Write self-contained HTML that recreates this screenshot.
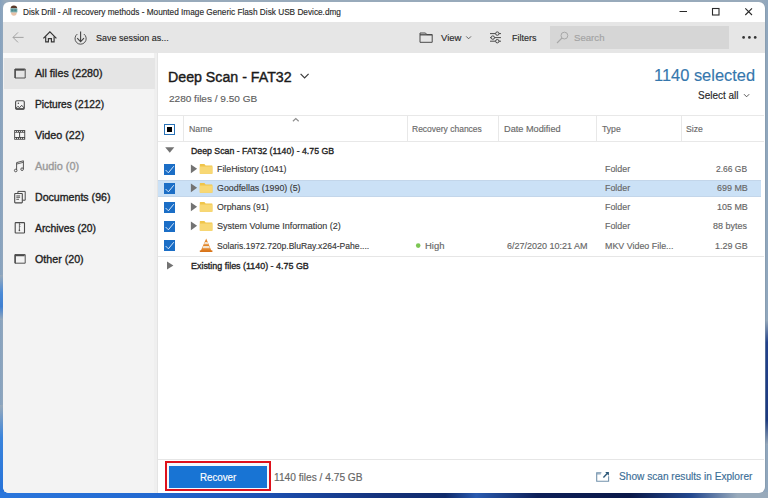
<!DOCTYPE html>
<html><head><meta charset="utf-8">
<style>
*{margin:0;padding:0;box-sizing:border-box}
html,body{width:768px;height:498px;overflow:hidden}
body{position:relative;font-family:"Liberation Sans",sans-serif;background:#98aabb}
.a{position:absolute}
.t{position:absolute;white-space:nowrap;line-height:1}
svg{position:absolute;overflow:visible}
</style></head><body>
<!-- desktop -->
<div class="a" style="left:0;top:0;width:768px;height:498px;background:linear-gradient(90deg,#86a2bf 0,#98aabb 5px,#98aabb 760px,#8fa6bd 768px)"></div>
<div class="a" style="left:0;top:275px;width:4px;height:45px;background:linear-gradient(180deg,#98aabb,#4a8ad6 40%,#3f80d2 70%,#98aabb)"></div>
<div class="a" style="left:0;top:405px;width:4px;height:93px;background:linear-gradient(180deg,#98aabb,#3a84dc 35%,#2470d8)"></div>
<div class="a" style="left:764px;top:320px;width:4px;height:125px;background:linear-gradient(180deg,#98aabb,#23428c 18%,#1d3a80 80%,#98aabb)"></div>
<div class="a" style="left:0;top:492px;width:768px;height:6px;background:linear-gradient(90deg,#2a76dc 0,#2268d0 20%,#1c4fb0 35%,#14317a 50%,#0f2a6a 58%,#2a5bb0 62%,#0d1f58 70%,#0a1848 82%,#23488f 90%,#98aabb 96%)"></div>
<!-- window -->
<div class="a" style="left:3px;top:2px;width:761.6px;height:490.8px;background:#fff;border-radius:6px;overflow:hidden;box-shadow:0.5px 0 0 #7f93a6">
  <div class="a" style="left:0;top:20px;width:762px;height:31px;background:#e6e6e6"></div>
  
  <div class="a" style="left:0;top:51px;width:154px;height:440px;background:#f3f3f3"></div>
  <div class="a" style="left:0;top:51px;width:154px;height:5px;background:#fafafa"></div>
  <div class="a" style="left:150.5px;top:51px;width:3.5px;height:440px;background:#efefef"></div>
  <div class="a" style="left:154px;top:51px;width:1px;height:440px;background:#e4e4e4"></div>
  <div class="a" style="left:1px;top:56px;width:150.5px;height:31px;background:#e5e5e5"></div>
</div>

<!-- title icon -->
<svg style="left:0;top:0" width="30" height="22">
  <path d="M10.6 8.5 Q10.6 5.6 13.9 5.6 Q17.2 5.6 17.2 8.5 Z" fill="#5a3a2a"/>
  <rect x="10.4" y="8.2" width="7" height="4.6" rx="1" fill="#7fb3b5"/>
  <path d="M11 12.6 H16.8 Q16.6 15.8 13.9 15.8 Q11.2 15.8 11 12.6 Z" fill="#e8c2a8"/>
  <rect x="11.2" y="9.2" width="2.4" height="2.2" fill="#4d8a8d"/>
  <rect x="14.2" y="9.2" width="2.4" height="2.2" fill="#4d8a8d"/>
</svg>
<!-- window controls -->
<svg style="left:0;top:0" width="768" height="22">
  <line x1="679.5" y1="11.5" x2="687" y2="11.5" stroke="#2a2a2a" stroke-width="1"/>
  <rect x="712.5" y="8.5" width="6.5" height="6.5" fill="none" stroke="#2a2a2a" stroke-width="1.1"/>
  <path d="M745.3 8.3 L752 15 M752 8.3 L745.3 15" stroke="#2a2a2a" stroke-width="1.1"/>
</svg>

<!-- toolbar icons -->
<svg style="left:0;top:0" width="768" height="56">
  <path d="M13 37.4 H23.6 M13 37.4 L18 32.4 M13 37.4 L18 42.4" stroke="#a3a3a3" stroke-width="1" fill="none"/>
  <path d="M43.4 38.4 L49.9 31.9 L56.4 38.4" stroke="#333" stroke-width="1.2" fill="none" stroke-linejoin="miter"/>
  <path d="M45.7 36.6 V41.9 H48.4 V38.6 H51.4 V41.9 H54.1 V36.6" stroke="#333" stroke-width="1.15" fill="none"/>
  <path d="M77.4 34 A5.6 5.6 0 1 0 83.8 34" stroke="#555" stroke-width="1" fill="none"/>
  <path d="M80.6 31.4 V41.6 M77.2 38.2 L80.6 41.6 L84 38.2" stroke="#444" stroke-width="1.1" fill="none"/>
  <!-- view folder -->
  <path d="M420 33 H425.5 L426.8 34.6 H432.2 V42.3 H420 Z" stroke="#4a4a4a" stroke-width="1" fill="none"/>
  <line x1="420" y1="34.8" x2="432.2" y2="34.8" stroke="#4a4a4a" stroke-width="1.3"/>
  <path d="M466.2 36.4 L468.6 38.8 L471 36.4" stroke="#555" stroke-width="0.9" fill="none"/>
  <!-- filters -->
  <path d="M490 33.6 H501 M490 37.6 H501 M490 41.2 H501" stroke="#4a4a4a" stroke-width="1" fill="none"/>
  <circle cx="497.3" cy="33.6" r="1.7" fill="#e6e6e6" stroke="#4a4a4a" stroke-width="1"/>
  <circle cx="492.8" cy="37.6" r="1.7" fill="#e6e6e6" stroke="#4a4a4a" stroke-width="1"/>
  <circle cx="497.3" cy="41.2" r="1.7" fill="#e6e6e6" stroke="#4a4a4a" stroke-width="1"/>
</svg>
<div class="a" style="left:550px;top:26px;width:179px;height:23px;background:#d6d6d6"></div>
<svg style="left:0;top:0" width="768" height="56">
  <circle cx="564.4" cy="35.6" r="3.4" stroke="#a8a8a8" stroke-width="1" fill="none"/>
  <path d="M562 38 L557 43" stroke="#a8a8a8" stroke-width="1.1"/>
  <circle cx="743.6" cy="37.4" r="1.35" fill="#333"/>
  <circle cx="749.4" cy="37.4" r="1.35" fill="#333"/>
  <circle cx="755.2" cy="37.4" r="1.35" fill="#333"/>
</svg>

<!-- sidebar icons -->
<svg style="left:0;top:0" width="160" height="280">
  <g fill="none" stroke="#4a4a4a">
    <!-- all files -->
    <path d="M15 69 H25.2 V78 H15 Z" stroke-width="0.95"/>
    <path d="M15.2 69.8 H24.6" stroke-width="1.7"/>
    <path d="M15.2 69 V78" stroke-width="1.3"/>
    <!-- pictures -->
    <rect x="15.6" y="100.7" width="8.7" height="8.4" rx="1.3" stroke-width="1.1"/>
    <path d="M15.6 108.6 L17.9 106.3 L19.6 107.7 L21.7 105.3 L24.3 108.2" stroke-width="1"/>
    <path d="M15.8 108.9 H24.2" stroke-width="1.3"/>
    <circle cx="18.4" cy="103.3" r="0.75" fill="#4a4a4a" stroke="none"/>
    <!-- audio -->
    <path d="M16.6 170 V162.6 L23.4 160.8 V169" stroke-width="1" stroke="#555"/>
    <path d="M16.6 164.1 L23.4 162.3" stroke-width="0.9" stroke="#555"/>
    <circle cx="15.7" cy="170.5" r="1.3" stroke-width="1" stroke="#555"/>
    <circle cx="22.1" cy="169.2" r="1.3" stroke-width="1" stroke="#555"/>
    <!-- documents -->
    <path d="M17.9 193 V191.4 H25.2 V200.2 H22.6" stroke-width="1"/>
    <rect x="14.7" y="193.5" width="7.6" height="9.4" rx="0.6" stroke-width="1.1"/>
    <path d="M16.3 195.9 H20.1 M16.3 197.3 H20.1 M16.3 199.3 H19" stroke-width="0.9"/>
    <!-- archives -->
    <rect x="15.2" y="222.6" width="9.3" height="10.4" rx="0.6" stroke-width="1.1"/>
    <path d="M19.4 222.6 V230.4" stroke-width="0.8"/>
    <path d="M19.6 224.5 h0.8 M19.6 226.5 h0.8" stroke-width="0.7"/>
    <circle cx="19.4" cy="230.4" r="0.8" fill="#4a4a4a" stroke="none"/>
    <!-- other -->
    <path d="M15 254.6 H25.2 V263.2 H15 Z" stroke-width="0.95"/>
    <path d="M15.2 255.4 H24.6" stroke-width="1.7"/>
    <path d="M15.2 254.6 V263.2" stroke-width="1.3"/>
  </g>
  <!-- video -->
  <rect x="14.2" y="130.1" width="11" height="9.6" fill="#444"/>
  <rect x="15.1" y="132.7" width="4" height="4.3" fill="#f3f3f3"/>
  <rect x="20.1" y="132.7" width="4.2" height="4.3" fill="#f3f3f3"/>
  <g fill="#f3f3f3">
    <circle cx="15.5" cy="131.5" r="0.62"/><circle cx="17.5" cy="131.5" r="0.62"/><circle cx="19.6" cy="131.5" r="0.62"/><circle cx="21.6" cy="131.5" r="0.62"/><circle cx="23.6" cy="131.5" r="0.62"/>
    <circle cx="15.5" cy="138.3" r="0.62"/><circle cx="17.5" cy="138.3" r="0.62"/><circle cx="19.6" cy="138.3" r="0.62"/><circle cx="21.6" cy="138.3" r="0.62"/><circle cx="23.6" cy="138.3" r="0.62"/>
  </g>
</svg>

<!-- table lines -->
<div class="a" style="left:158px;top:115px;width:606px;height:1px;background:#e8e8e8"></div>
<div class="a" style="left:158px;top:141px;width:606px;height:1px;background:#e8e8e8"></div>
<div class="a" style="left:183px;top:115px;width:1px;height:26px;background:#e8e8e8"></div>
<div class="a" style="left:407px;top:115px;width:1px;height:26px;background:#e8e8e8"></div>
<div class="a" style="left:498px;top:115px;width:1px;height:26px;background:#e8e8e8"></div>
<div class="a" style="left:596px;top:115px;width:1px;height:26px;background:#e8e8e8"></div>
<div class="a" style="left:681px;top:115px;width:1px;height:26px;background:#e8e8e8"></div>
<!-- header checkbox -->
<div class="a" style="left:164px;top:124px;width:11px;height:11px;border:1.6px solid #2a73b8;background:#fff"></div>
<div class="a" style="left:167px;top:127px;width:5px;height:5px;background:#000"></div>
<svg style="left:0;top:0" width="768" height="160">
  <path d="M292.9 121.2 L295.8 118.5 L298.7 121.2" stroke="#8f8f8f" stroke-width="1.2" fill="none"/>
  <path d="M165.2 147.2 H174.3 L169.75 152.8 Z" fill="#737373"/>
</svg>

<!-- selected row -->
<div class="a" style="left:158px;top:180px;width:603px;height:17px;background:#cbe1f6;border-top:1px solid #c3d6ea;border-bottom:1px solid #c3d6ea"></div>
<div class="a" style="left:158px;top:256px;width:606px;height:1px;background:#e6e6e6"></div>

<svg style="left:0;top:0" width="768" height="300">
  <defs>
    <g id="cbx"><rect x="0" y="0" width="11" height="11" fill="#1b6ec6"/><path d="M1.6 6 L4.4 8.8 L9.8 2.2" stroke="#e6f2ff" stroke-width="0.9" fill="none"/></g>
    <g id="fld"><path d="M0 0.6 Q0 0 0.6 0 H4.6 L5.8 1.4 H12.2 Q12.6 1.4 12.6 1.9 V9.2 Q12.6 9.7 12.1 9.7 H0.5 Q0 9.7 0 9.2 Z" fill="#f0c54a"/><rect x="0" y="2.4" width="12.6" height="7.3" rx="0.5" fill="#f8d874"/></g>
    <path id="tri" d="M0 0 L6.2 4.4 L0 8.8 Z" fill="#737373"/>
  </defs>
  <use href="#cbx" x="164" y="164"/>
  <use href="#cbx" x="164" y="183"/>
  <use href="#cbx" x="164" y="202"/>
  <use href="#cbx" x="164" y="221"/>
  <use href="#cbx" x="164" y="240"/>
  <use href="#tri" x="190.9" y="164.4"/>
  <use href="#tri" x="190.9" y="183.4"/>
  <use href="#tri" x="190.9" y="202.4"/>
  <use href="#tri" x="190.9" y="221.4"/>
  <use href="#fld" x="199.8" y="164"/>
  <use href="#fld" x="199.8" y="183"/>
  <use href="#fld" x="199.8" y="202"/>
  <use href="#fld" x="199.8" y="221"/>
  <!-- vlc -->
  <path d="M206.2 238.4 L212 251.9 H200.2 Z" fill="#e3862a"/>
  <path d="M204.8 242 H207.6 L208.4 244.2 H204 Z M203.3 246 H209.1 L209.9 248.2 H202.5 Z" fill="#f2e2cc"/>
  <path d="M199.8 250.4 H212.4 V252 H199.8 Z" fill="#d8741a"/>
  <path d="M167 261.5 V269.6 L173.4 265.55 Z" fill="#737373"/>
  <circle cx="418.2" cy="245.6" r="2.3" fill="#7cc653"/>
</svg>

<!-- bottom bar -->
<div class="a" style="left:158px;top:459px;width:606px;height:1px;background:#e6e6e6"></div>
<div class="a" style="left:164.8px;top:461.2px;width:106.2px;height:30.3px;border:2.9px solid #de111b;background:#f4f8fc"></div>
<div class="a" style="left:169px;top:465.5px;width:98px;height:22.2px;background:#1874d4"></div>
<svg style="left:0;top:0" width="768" height="498">
  <path d="M601.4 472.8 H596.7 V481.2 H608.6 V476.2" stroke="#7393ad" stroke-width="1.1" fill="none"/>
  <path d="M597 473.9 H600.8" stroke="#7393ad" stroke-width="1"/>
  <path d="M603.4 477.4 L608.2 472.6" stroke="#2d5878" stroke-width="1.4" fill="none"/>
  <path d="M605.2 472 H608.9 V475.7 Z" fill="#2d5878"/>
</svg>
<svg style="left:0;top:0" width="768" height="120">
  <path d="M300.6 73.9 L304.6 77.9 L308.6 73.9" stroke="#3a3a3a" stroke-width="1.2" fill="none"/>
  <path d="M744 94.2 L746.6 96.8 L749.2 94.2" stroke="#444" stroke-width="0.9" fill="none"/>
</svg>
<div class="t" style="left:22.70px;top:7.52px;font-size:8.8px;font-weight:normal;-webkit-text-stroke:0.15px #2b2b2b;color:#2b2b2b;transform:scaleX(0.9371);transform-origin:0 0">Disk Drill - All recovery methods - Mounted Image Generic Flash Disk USB Device.dmg</div>
<div class="t" style="left:96.10px;top:33.70px;font-size:9.3px;font-weight:normal;-webkit-text-stroke:0.15px #2b2b2b;color:#2b2b2b;transform:scaleX(0.9644);transform-origin:0 0">Save session as...</div>
<div class="t" style="left:441.00px;top:33.70px;font-size:9.3px;font-weight:normal;-webkit-text-stroke:0.15px #2b2b2b;color:#2b2b2b;transform:scaleX(1.0213);transform-origin:0 0">View</div>
<div class="t" style="left:511.80px;top:33.70px;font-size:9.3px;font-weight:normal;-webkit-text-stroke:0.15px #2b2b2b;color:#2b2b2b;transform:scaleX(0.9665);transform-origin:0 0">Filters</div>
<div class="t" style="left:573.50px;top:33.70px;font-size:9.3px;font-weight:normal;-webkit-text-stroke:0.15px #a3a3a3;color:#a3a3a3;transform:scaleX(1.0346);transform-origin:0 0">Search</div>
<div class="t" style="left:35.40px;top:68.96px;font-size:10.4px;font-weight:normal;-webkit-text-stroke:0.35px #1f1f1f;color:#1f1f1f;transform:scaleX(1.0249);transform-origin:0 0">All files (2280)</div>
<div class="t" style="left:35.40px;top:99.96px;font-size:10.4px;font-weight:normal;-webkit-text-stroke:0.35px #1f1f1f;color:#1f1f1f;transform:scaleX(0.9801);transform-origin:0 0">Pictures (2122)</div>
<div class="t" style="left:35.40px;top:130.96px;font-size:10.4px;font-weight:normal;-webkit-text-stroke:0.35px #1f1f1f;color:#1f1f1f;transform:scaleX(1.0319);transform-origin:0 0">Video (22)</div>
<div class="t" style="left:35.40px;top:161.96px;font-size:10.4px;font-weight:normal;-webkit-text-stroke:0.35px #9a9a9a;color:#9a9a9a;transform:scaleX(1.0479);transform-origin:0 0">Audio (0)</div>
<div class="t" style="left:35.40px;top:192.96px;font-size:10.4px;font-weight:normal;-webkit-text-stroke:0.35px #1f1f1f;color:#1f1f1f;transform:scaleX(1.0210);transform-origin:0 0">Documents (96)</div>
<div class="t" style="left:35.40px;top:223.96px;font-size:10.4px;font-weight:normal;-webkit-text-stroke:0.35px #1f1f1f;color:#1f1f1f;transform:scaleX(0.9959);transform-origin:0 0">Archives (20)</div>
<div class="t" style="left:35.40px;top:254.96px;font-size:10.4px;font-weight:normal;-webkit-text-stroke:0.35px #1f1f1f;color:#1f1f1f;transform:scaleX(1.0279);transform-origin:0 0">Other (20)</div>
<div class="t" style="left:168.49px;top:70.20px;font-size:14.0px;font-weight:normal;-webkit-text-stroke:0.4px #1a1a1a;color:#1a1a1a;transform:scaleX(1.0138);transform-origin:0 0">Deep Scan - FAT32</div>
<div class="t" style="left:169.20px;top:94.28px;font-size:9.9px;font-weight:normal;-webkit-text-stroke:0.15px #5e5e5e;color:#5e5e5e;transform:scaleX(1.0167);transform-origin:0 0">2280 files / 9.50 GB</div>
<div class="t" style="left:654.04px;top:66.88px;font-size:17.2px;font-weight:normal;-webkit-text-stroke:0.15px #3577ad;color:#3577ad;transform:scaleX(0.9559);transform-origin:0 0">1140 selected</div>
<div class="t" style="left:697.70px;top:89.59px;font-size:10.6px;font-weight:normal;-webkit-text-stroke:0.15px #262626;color:#262626;transform:scaleX(0.9430);transform-origin:0 0">Select all</div>
<div class="t" style="left:188.60px;top:124.85px;font-size:9.0px;font-weight:normal;-webkit-text-stroke:0.15px #6a6a6a;color:#6a6a6a;transform:scaleX(0.9749);transform-origin:0 0">Name</div>
<div class="t" style="left:411.70px;top:124.85px;font-size:9.0px;font-weight:normal;-webkit-text-stroke:0.15px #6a6a6a;color:#6a6a6a;transform:scaleX(0.9432);transform-origin:0 0">Recovery chances</div>
<div class="t" style="left:503.60px;top:124.85px;font-size:9.0px;font-weight:normal;-webkit-text-stroke:0.15px #6a6a6a;color:#6a6a6a;transform:scaleX(1.0194);transform-origin:0 0">Date Modified</div>
<div class="t" style="left:602.00px;top:124.85px;font-size:9.0px;font-weight:normal;-webkit-text-stroke:0.15px #6a6a6a;color:#6a6a6a;transform:scaleX(0.9600);transform-origin:0 0">Type</div>
<div class="t" style="left:685.50px;top:124.85px;font-size:9.0px;font-weight:normal;-webkit-text-stroke:0.15px #6a6a6a;color:#6a6a6a;transform:scaleX(0.9600);transform-origin:0 0">Size</div>
<div class="t" style="left:190.80px;top:145.64px;font-size:9.6px;font-weight:normal;-webkit-text-stroke:0.35px #222;color:#222222;transform:scaleX(0.9115);transform-origin:0 0">Deep Scan - FAT32 (1140) - 4.75 GB</div>
<div class="t" style="left:216.60px;top:164.33px;font-size:9.5px;font-weight:normal;-webkit-text-stroke:0.15px #3a3a3a;color:#3a3a3a;transform:scaleX(0.9278);transform-origin:0 0">FileHistory (1041)</div>
<div class="t" style="left:216.60px;top:183.33px;font-size:9.5px;font-weight:normal;-webkit-text-stroke:0.15px #3a3a3a;color:#3a3a3a;transform:scaleX(0.9308);transform-origin:0 0">Goodfellas (1990) (5)</div>
<div class="t" style="left:216.70px;top:202.33px;font-size:9.5px;font-weight:normal;-webkit-text-stroke:0.15px #3a3a3a;color:#3a3a3a;transform:scaleX(0.9210);transform-origin:0 0">Orphans (91)</div>
<div class="t" style="left:216.70px;top:221.33px;font-size:9.5px;font-weight:normal;-webkit-text-stroke:0.15px #3a3a3a;color:#3a3a3a;transform:scaleX(0.9497);transform-origin:0 0">System Volume Information (2)</div>
<div class="t" style="left:216.70px;top:240.93px;font-size:9.5px;font-weight:normal;-webkit-text-stroke:0.15px #3a3a3a;color:#3a3a3a;transform:scaleX(0.9043);transform-origin:0 0">Solaris.1972.720p.BluRay.x264-Pahe....</div>
<div class="t" style="left:190.80px;top:260.54px;font-size:9.6px;font-weight:normal;-webkit-text-stroke:0.35px #222;color:#222222;transform:scaleX(0.9293);transform-origin:0 0">Existing files (1140) - 4.75 GB</div>
<div class="t" style="left:605.00px;top:164.33px;font-size:9.5px;font-weight:normal;-webkit-text-stroke:0.15px #666666;color:#666666;transform:scaleX(0.9341);transform-origin:0 0">Folder</div>
<div class="t" style="left:605.00px;top:183.33px;font-size:9.5px;font-weight:normal;-webkit-text-stroke:0.15px #666666;color:#666666;transform:scaleX(0.9341);transform-origin:0 0">Folder</div>
<div class="t" style="left:605.00px;top:202.33px;font-size:9.5px;font-weight:normal;-webkit-text-stroke:0.15px #666666;color:#666666;transform:scaleX(0.9341);transform-origin:0 0">Folder</div>
<div class="t" style="left:605.00px;top:221.33px;font-size:9.5px;font-weight:normal;-webkit-text-stroke:0.15px #666666;color:#666666;transform:scaleX(0.9341);transform-origin:0 0">Folder</div>
<div class="t" style="left:605.00px;top:240.93px;font-size:9.5px;font-weight:normal;-webkit-text-stroke:0.15px #666666;color:#666666;transform:scaleX(0.9356);transform-origin:0 0">MKV Video File...</div>
<div class="t" style="left:716.30px;top:164.33px;font-size:9.5px;font-weight:normal;-webkit-text-stroke:0.15px #666666;color:#666666;transform:scaleX(0.8923);transform-origin:0 0">2.66 GB</div>
<div class="t" style="left:716.64px;top:183.33px;font-size:9.5px;font-weight:normal;-webkit-text-stroke:0.15px #666666;color:#666666;transform:scaleX(0.9400);transform-origin:0 0">699 MB</div>
<div class="t" style="left:716.64px;top:202.33px;font-size:9.5px;font-weight:normal;-webkit-text-stroke:0.15px #666666;color:#666666;transform:scaleX(0.9400);transform-origin:0 0">105 MB</div>
<div class="t" style="left:713.00px;top:221.33px;font-size:9.5px;font-weight:normal;-webkit-text-stroke:0.15px #666666;color:#666666;transform:scaleX(0.9430);transform-origin:0 0">88 bytes</div>
<div class="t" style="left:714.65px;top:240.93px;font-size:9.5px;font-weight:normal;-webkit-text-stroke:0.15px #666666;color:#666666;transform:scaleX(0.9400);transform-origin:0 0">1.29 GB</div>
<div class="t" style="left:424.70px;top:240.93px;font-size:9.5px;font-weight:normal;-webkit-text-stroke:0.15px #666666;color:#666666;transform:scaleX(0.9920);transform-origin:0 0">High</div>
<div class="t" style="left:506.80px;top:240.93px;font-size:9.5px;font-weight:normal;-webkit-text-stroke:0.15px #666666;color:#666666;transform:scaleX(0.9480);transform-origin:0 0">6/27/2020 10:21 AM</div>
<div class="t" style="left:200.00px;top:472.50px;font-size:10.0px;font-weight:normal;-webkit-text-stroke:0.15px #ffffff;color:#ffffff;transform:scaleX(0.9735);transform-origin:0 0">Recover</div>
<div class="t" style="left:274.30px;top:472.70px;font-size:10.0px;font-weight:normal;-webkit-text-stroke:0.15px #666666;color:#666666;transform:scaleX(1.0169);transform-origin:0 0">1140 files / 4.75 GB</div>
<div class="t" style="left:618.70px;top:471.56px;font-size:10.4px;font-weight:normal;-webkit-text-stroke:0.15px #3a6d96;color:#3a6d96;transform:scaleX(0.9745);transform-origin:0 0">Show scan results in Explorer</div>
</body></html>
